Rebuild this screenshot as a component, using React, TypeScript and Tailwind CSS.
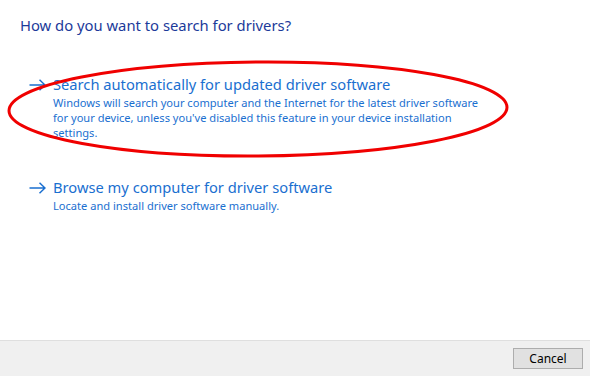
const font = { fontFamily: '"Noto Sans", "Open Sans", sans-serif' };

const options = [
  {
    title: "Search automatically for updated driver software",
    lines: [
      "Windows will search your computer and the Internet for the latest driver software",
      "for your device, unless you've disabled this feature in your device installation",
      "settings.",
    ],
  },
  {
    title: "Browse my computer for driver software",
    lines: ["Locate and install driver software manually."],
  },
];

function Arrow() {
  return (
    <svg width="17" height="12" viewBox="0 0 17 12" className="shrink-0 mt-[6px]">
      <path d="M0.5 6H16M10.5 0.8L16 6L10.5 11.2" fill="none" stroke="#1a6fd0" strokeWidth="1.5" />
    </svg>
  );
}

export default function App() {
  return (
    <div className="relative w-[590px] h-[376px] bg-white flex flex-col" style={font}>
      <div className="flex-1 pt-[15px] pl-[20px]">
        <h1 className="text-[14.8px] leading-[20px] text-[#1c3a9a]">How do you want to search for drivers?</h1>

        <div className="mt-[38px] flex flex-col gap-[36px] pl-[9px]">
          {options.map((o) => (
            <div key={o.title} className="flex gap-[7px]">
              <Arrow />
              <div>
                <p className="text-[14.7px] leading-[22px] text-[#1a6fd0]">{o.title}</p>
                <div className="text-[11.1px] leading-[15px] text-[#1a6fd0]">
                  {o.lines.map((l) => (
                    <p key={l}>{l}</p>
                  ))}
                </div>
              </div>
            </div>
          ))}
        </div>
      </div>

      <div className="h-[36px] bg-[#f0f0f0] border-t border-[#dfdfdf] flex items-center justify-end pr-[7px]">
        <button className="w-[70px] h-[21px] bg-[#e1e1e1] border border-[#adadad] text-[12px] text-black leading-none">
          Cancel
        </button>
      </div>

      {/* red annotation ring */}
      <svg className="absolute left-0 top-0 pointer-events-none" width="590" height="376">
        <ellipse cx="258" cy="109" rx="249" ry="47" fill="none" stroke="#f00000" strokeWidth="3" transform="rotate(-0.4 258 109)" />
      </svg>
    </div>
  );
}
